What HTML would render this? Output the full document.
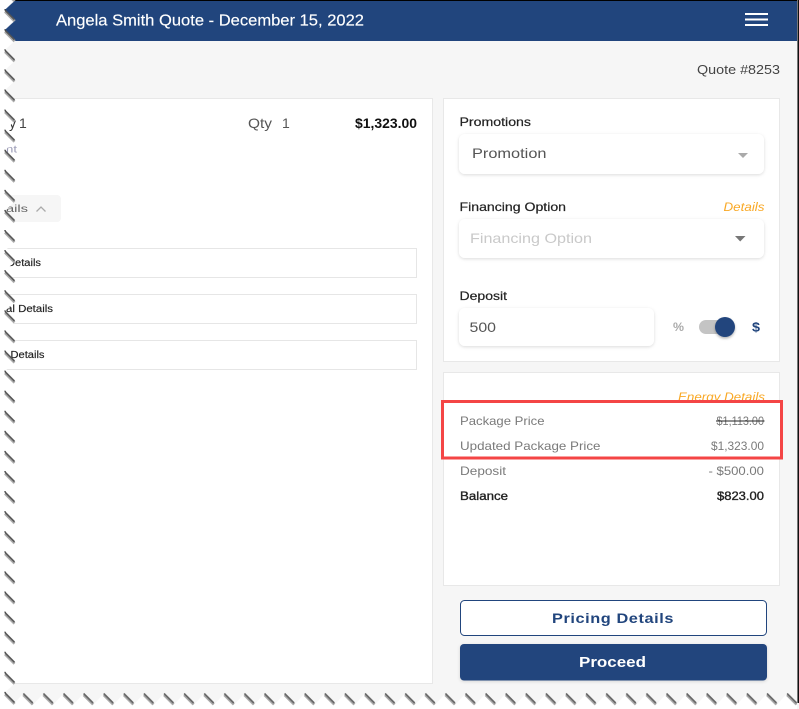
<!DOCTYPE html>
<html lang="en">
<head>
<meta charset="utf-8">
<title>Angela Smith Quote</title>
<style>
html,body{margin:0;padding:0;background:#fff;width:799px;height:709px;overflow:hidden}
svg{display:block}
text{font-family:"Liberation Sans",sans-serif}
.lb{font-size:12px;fill:#222;stroke:#222;stroke-width:.2}
.g{font-size:12px;fill:#7a7a7a}
.b{font-size:12px;fill:#222;stroke:#222;stroke-width:.35}
.or{font-size:12px;fill:#f9a825;font-style:italic}
.d{font-size:10px;fill:#222;stroke:#222;stroke-width:.15}
</style>
</head>
<body>
<svg width="799" height="709" viewBox="0 0 799 709" xmlns="http://www.w3.org/2000/svg">
<defs>
<filter id="s" x="-10%" y="-20%" width="120%" height="150%"><feDropShadow dx="0" dy="1" stdDeviation="1.5" flood-color="#000" flood-opacity=".14"/></filter>
<filter id="k" x="-40%" y="-40%" width="180%" height="180%"><feDropShadow dx="0" dy="1.5" stdDeviation="1.2" flood-color="#000" flood-opacity=".3"/></filter>
<pattern id="zl" patternUnits="userSpaceOnUse" x="0" y="46.84" width="20" height="20.08">
<polygon points="0,0 8.3,0 5,3 15.5,13.5 8.3,20.08 0,20.08" fill="#fff"/>
<line x1="5" y1="5" x2="14.500" y2="14.500" stroke="#a8a8a8" stroke-width="2.600"/>
<line x1="5" y1="3.500" x2="14.500" y2="13" stroke="#555" stroke-width="1.600"/>
<rect x="4.500" y="2.500" width="1" height="1" fill="#000"/>
</pattern>
<pattern id="zb" patternUnits="userSpaceOnUse" x="0.2" y="690" width="20.1" height="19">
<polygon points="0,6.78 3,3.500 13.500,14 20.100,6.78 20.100,19 0,19" fill="#fff"/>
<line x1="3" y1="5" x2="12.500" y2="14.500" stroke="#a8a8a8" stroke-width="2.600"/>
<line x1="3" y1="3.500" x2="12.500" y2="13" stroke="#666" stroke-width="1.600"/>
</pattern>
</defs>

<rect width="799" height="709" fill="#f6f6f6"/>
<rect x="0" y="1" width="799" height="40" fill="#21457d"/>
<rect x="0" y="0" width="799" height="1" fill="#000"/>
<text x="56" y="25.500" font-size="16" fill="#fff" stroke="#fff" stroke-width=".15" textLength="308" lengthAdjust="spacingAndGlyphs">Angela Smith Quote - December 15, 2022</text>
<rect x="745" y="13" width="23" height="2" fill="#fff"/>
<rect x="745" y="18.500" width="23" height="2" fill="#fff"/>
<rect x="745" y="24" width="23" height="2" fill="#fff"/>
<text x="697" y="74" font-size="13" fill="#444" textLength="83" lengthAdjust="spacingAndGlyphs">Quote #8253</text>

<!-- left card -->
<rect x="0" y="98.500" width="432.500" height="585" fill="#fff" stroke="#e8e8e8"/>
<text x="9" y="128" font-size="14" fill="#333">y</text>
<text x="19" y="128" font-size="14" fill="#444">1</text>
<text x="248" y="128" font-size="14" fill="#555" textLength="24" lengthAdjust="spacingAndGlyphs">Qty</text>
<text x="282" y="128" font-size="14" fill="#555">1</text>
<text x="355" y="128" font-size="14" font-weight="700" fill="#111" textLength="62" lengthAdjust="spacingAndGlyphs">$1,323.00</text>
<text x="6" y="152.500" font-size="10" fill="#9a9ab5" textLength="11" lengthAdjust="spacingAndGlyphs">nt</text>
<rect x="-10" y="195" width="71" height="27" rx="4" fill="#f6f6f6"/>
<text x="6" y="212" font-size="10" fill="#666" textLength="22" lengthAdjust="spacingAndGlyphs">ails</text>
<path d="M36.500 211.500L41 207L45.500 211.500" fill="none" stroke="#aaa" stroke-width="1.300"/>
<rect x="0" y="248.500" width="416.500" height="29" fill="#fff" stroke="#e6e6e6"/>
<rect x="0" y="294.500" width="416.500" height="29" fill="#fff" stroke="#e6e6e6"/>
<rect x="0" y="340.500" width="416.500" height="29" fill="#fff" stroke="#e6e6e6"/>
<text class="d" x="7" y="266" textLength="34" lengthAdjust="spacingAndGlyphs">Details</text>
<text class="d" x="6" y="312" textLength="47" lengthAdjust="spacingAndGlyphs">al Details</text>
<text class="d" x="10.500" y="358" textLength="34" lengthAdjust="spacingAndGlyphs">Details</text>

<!-- promotions card -->
<rect x="443.500" y="98.500" width="336" height="263" fill="#fff" stroke="#e8e8e8"/>
<text class="lb" x="459.500" y="126" textLength="71.500" lengthAdjust="spacingAndGlyphs">Promotions</text>
<rect x="459" y="134" width="305" height="40" rx="6" fill="#fff" filter="url(#s)"/>
<text x="472" y="158" font-size="14" fill="#555" textLength="74.500" lengthAdjust="spacingAndGlyphs">Promotion</text>
<polygon points="738,153 748,153 743,158" fill="#aaa"/>
<text class="lb" x="459.500" y="211" textLength="106.500" lengthAdjust="spacingAndGlyphs">Financing Option</text>
<text class="or" x="723.500" y="211" textLength="41" lengthAdjust="spacingAndGlyphs">Details</text>
<rect x="459" y="219" width="305" height="39" rx="6" fill="#fff" filter="url(#s)"/>
<text x="470" y="243" font-size="14" fill="#c9c9c9" textLength="122" lengthAdjust="spacingAndGlyphs">Financing Option</text>
<polygon points="735,236 745.500,236 740.200,241.500" fill="#777"/>
<text class="lb" x="459.500" y="300" textLength="47.500" lengthAdjust="spacingAndGlyphs">Deposit</text>
<rect x="459" y="308" width="195" height="38" rx="6" fill="#fff" filter="url(#s)"/>
<text x="469.500" y="332" font-size="14" fill="#555" textLength="26.500" lengthAdjust="spacingAndGlyphs">500</text>
<text x="673" y="331" font-size="11.500" font-weight="700" fill="#aaa" textLength="11" lengthAdjust="spacingAndGlyphs">%</text>
<rect x="699" y="320" width="31" height="14" rx="7" fill="#c4c4c4"/>
<circle cx="725" cy="327" r="10" fill="#21457d" filter="url(#k)"/>
<text x="752" y="331.500" font-size="12.500" font-weight="700" fill="#21457d" textLength="8" lengthAdjust="spacingAndGlyphs">$</text>

<!-- totals card -->
<rect x="443.500" y="372.500" width="336" height="213" fill="#fff" stroke="#e8e8e8"/>
<text class="or" x="678" y="401" textLength="87" lengthAdjust="spacingAndGlyphs">Energy Details</text>
<rect x="443" y="402" width="337" height="56" fill="#fff"/>
<text class="g" x="460" y="425" textLength="84.500" lengthAdjust="spacingAndGlyphs">Package Price</text>
<text class="g" x="716.500" y="425" textLength="47.500" lengthAdjust="spacingAndGlyphs">$1,113.00</text>
<rect x="716" y="420.500" width="48.500" height="1" fill="#222"/>
<text class="g" x="460" y="450" textLength="140.500" lengthAdjust="spacingAndGlyphs">Updated Package Price</text>
<text class="g" x="711" y="450" textLength="53" lengthAdjust="spacingAndGlyphs">$1,323.00</text>
<text class="g" x="460" y="475" textLength="46" lengthAdjust="spacingAndGlyphs">Deposit</text>
<text class="g" x="708.500" y="475" textLength="55.500" lengthAdjust="spacingAndGlyphs">- $500.00</text>
<text class="b" x="460" y="500" textLength="48" lengthAdjust="spacingAndGlyphs">Balance</text>
<text class="b" x="717" y="500" textLength="47" lengthAdjust="spacingAndGlyphs">$823.00</text>
<rect x="442.500" y="401.500" width="339" height="56.500" fill="none" stroke="#f44545" stroke-width="3"/>

<!-- buttons -->
<rect x="460.500" y="600.500" width="306" height="35" rx="4" fill="#fff" stroke="#21457d"/>
<text x="552" y="623" font-size="14" font-weight="700" fill="#21457d" letter-spacing=".5" textLength="122" lengthAdjust="spacingAndGlyphs">Pricing Details</text>
<rect x="460" y="644" width="307" height="36.500" rx="4" fill="#21457d" filter="url(#s)"/>
<text x="579" y="667" font-size="14.500" font-weight="700" fill="#fff" textLength="67" lengthAdjust="spacingAndGlyphs">Proceed</text>

<!-- torn edge -->
<rect x="797" y="0" width="1" height="703" fill="#777"/>
<rect x="798" y="0" width="1" height="703" fill="#111"/>
<rect x="0" y="704" width="18" height="5" fill="#fff"/>
<rect x="16" y="690" width="781" height="19" fill="url(#zb)"/>
<rect x="0" y="0" width="20" height="709" fill="url(#zl)"/>
</svg>
</body>
</html>
